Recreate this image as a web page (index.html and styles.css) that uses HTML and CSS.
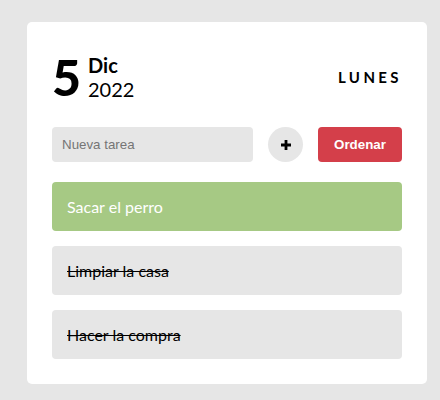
FILE: index.html
```html
<!DOCTYPE html>
<html lang="es">
<head>
<meta charset="utf-8">
<title>Tareas</title>
<link rel="stylesheet" href="styles.css">
</head>
<body>
<div class="card">
  <header class="header">
    <div class="date">
      <span class="day">5</span>
      <div class="month-year">
        <span class="month">Dic</span>
        <span class="year">2022</span>
      </div>
    </div>
    <div class="weekday">LUNES</div>
  </header>
  <form class="add-row">
    <input class="new-task" type="text" placeholder="Nueva tarea">
    <button class="add-btn" type="button" aria-label="Añadir">
      <svg class="plus-icon" viewBox="0 0 10 10" width="10" height="10" aria-hidden="true">
        <path d="M3.6 0h2.8v3.6H10v2.8H6.4V10H3.6V6.4H0V3.6h3.6z" fill="#000"/>
      </svg>
    </button>
    <button class="sort-btn" type="button">Ordenar</button>
  </form>
  <ul class="tasks">
    <li class="task task-active">Sacar el perro</li>
    <li class="task task-done">Limpiar la casa</li>
    <li class="task task-done">Hacer la compra</li>
  </ul>
</div>
</body>
</html>
```
FILE: styles.css
```css
html, body {
  margin: 0;
  padding: 0;
}
body {
  background: #e6e6e6;
  font-family: Lato, "Liberation Sans", sans-serif;
  padding: 22px 13px 0 27px;
  min-height: 400px;
  box-sizing: border-box;
}
.card {
  width: 400px;
  box-sizing: border-box;
  background: #fff;
  border-radius: 5px;
  padding: 25px;
}
.header {
  display: flex;
  justify-content: space-between;
  align-items: center;
}
.date {
  display: flex;
  align-items: center;
  gap: 7px;
}
.day {
  font-size: 50px;
  font-weight: 900;
  line-height: 60px;
  color: #000;
}
.month-year {
  display: flex;
  flex-direction: column;
  font-size: 20px;
  line-height: 24px;
  color: #000;
}
.month {
  font-weight: 700;
}
.year {
  font-weight: 400;
}
.weekday {
  font-size: 15px;
  font-weight: 700;
  letter-spacing: 3.4px;
  color: #000;
}
.add-row {
  display: flex;
  gap: 15px;
  margin: 20px 0 0;
}
.new-task {
  flex: 1;
  min-width: 0;
  height: 35px;
  box-sizing: border-box;
  border: none;
  border-radius: 4px;
  background: #e6e6e6;
  padding: 0 10px;
  font-family: "Liberation Sans", Arial, sans-serif;
  font-size: 13.333px;
  color: #333;
  outline: none;
}
.new-task::placeholder {
  color: #757575;
}
.add-btn {
  width: 35px;
  height: 35px;
  border: none;
  border-radius: 50%;
  background: #e6e6e6;
  padding: 0;
  display: flex;
  align-items: center;
  justify-content: center;
}
.plus-icon {
  display: block;
}
.sort-btn {
  height: 35px;
  border: none;
  border-radius: 4px;
  background: #d43f4a;
  color: #fff;
  font-family: "Liberation Sans", Arial, sans-serif;
  font-size: 13.333px;
  font-weight: 700;
  padding: 0 16px;
  width: 84px;
}
.tasks {
  list-style: none;
  margin: 20px 0 0;
  padding: 0;
  display: flex;
  flex-direction: column;
  gap: 15px;
}
.task {
  height: 49px;
  box-sizing: border-box;
  display: flex;
  align-items: center;
  padding: 0 15px;
  border-radius: 4px;
  font-size: 16px;
}
.task-active {
  background: #a6c984;
  color: #fff;
}
.task-done {
  background: #e6e6e6;
  color: #000;
  text-decoration: line-through;
}
```
